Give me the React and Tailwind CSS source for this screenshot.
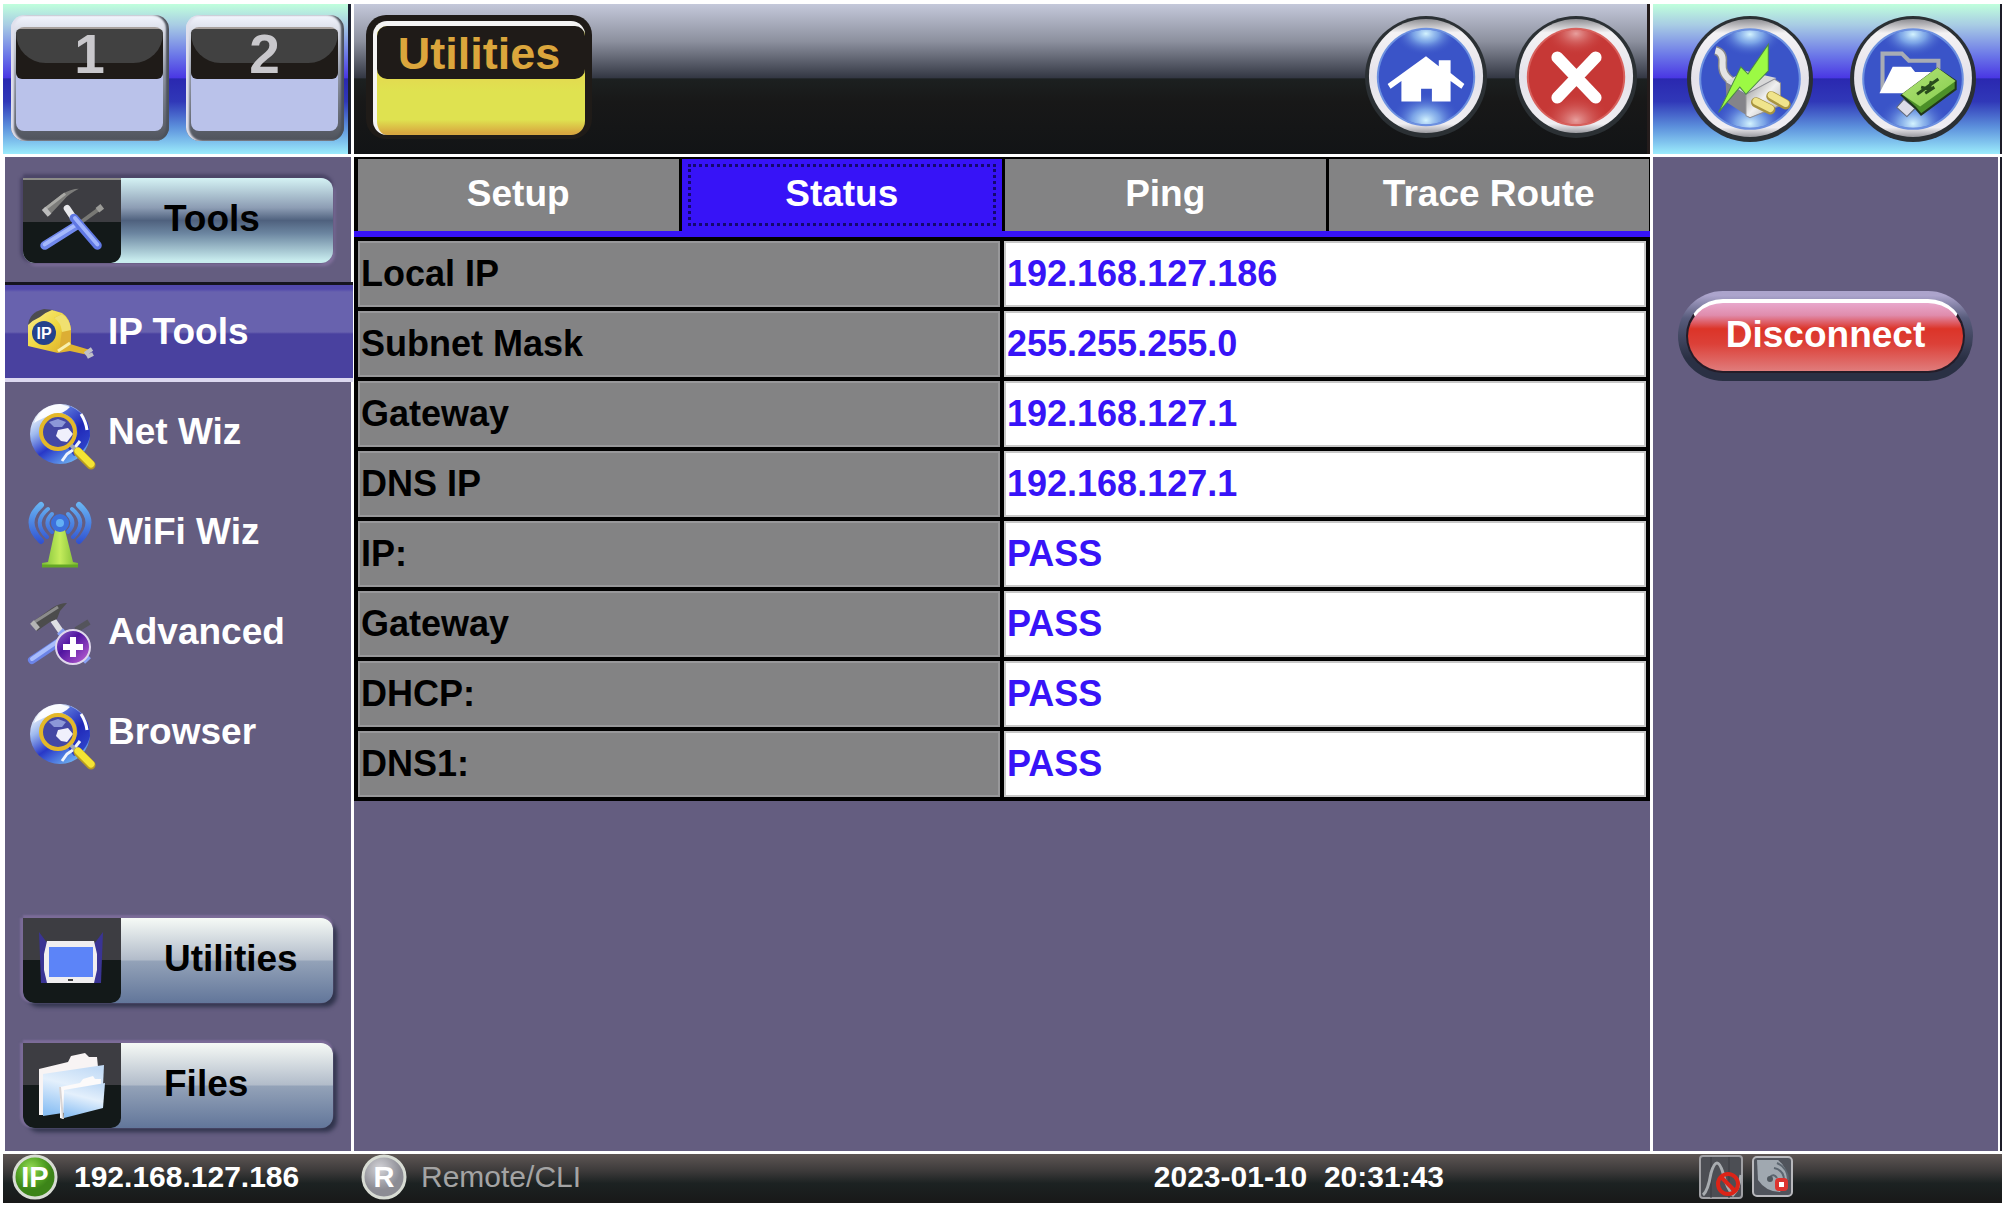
import clsx from "clsx";

const statusRows = [
  { label: "Local IP", value: "192.168.127.186" },
  { label: "Subnet Mask", value: "255.255.255.0" },
  { label: "Gateway", value: "192.168.127.1" },
  { label: "DNS IP", value: "192.168.127.1" },
  { label: "IP:", value: "PASS" },
  { label: "Gateway", value: "PASS" },
  { label: "DHCP:", value: "PASS" },
  { label: "DNS1:", value: "PASS" },
];

const tabs = ["Setup", "Status", "Ping", "Trace Route"];

const menuItems = [
  { label: "IP Tools", Icon: TapeIcon },
  { label: "Net Wiz", Icon: GlobeSearchIcon },
  { label: "WiFi Wiz", Icon: AntennaIcon },
  { label: "Advanced", Icon: AdvancedIcon },
  { label: "Browser", Icon: GlobeSearchIcon },
];

// gradients shared by all the icons
function IconDefs() {
  return (
    <svg aria-hidden="true" className="absolute h-0 w-0">
      <defs>
        <linearGradient id="rim" x1="0" x2="0" y1="0" y2="1">
          <stop offset="0" stopColor="#8d8d92" />
          <stop offset="0.12" stopColor="#f4f2f4" />
          <stop offset="0.5" stopColor="#e4e2ea" />
          <stop offset="0.92" stopColor="#f0eef2" />
          <stop offset="1" stopColor="#9a9aa0" />
        </linearGradient>
        <radialGradient id="glowBlue">
          <stop offset="0" stopColor="#d4f4ff" />
          <stop offset="0.4" stopColor="#8fbdf0" stopOpacity="0.75" />
          <stop offset="1" stopColor="#3a54c8" stopOpacity="0" />
        </radialGradient>
        <radialGradient id="glowRed">
          <stop offset="0" stopColor="#e8a09e" />
          <stop offset="1" stopColor="#c63836" stopOpacity="0" />
        </radialGradient>
        <clipPath id="disc">
          <circle cx="62" cy="62" r="48" />
        </clipPath>
        <linearGradient id="globe" x1="0.1" x2="0.7" y1="0.1" y2="1">
          <stop offset="0" stopColor="#ffffff" />
          <stop offset="0.3" stopColor="#9cb8ee" />
          <stop offset="0.6" stopColor="#2838c8" />
          <stop offset="1" stopColor="#6fb4f4" />
        </linearGradient>
        <linearGradient id="globeShade" x1="0.2" x2="0.7" y1="0" y2="1">
          <stop offset="0" stopColor="#5c78dc" />
          <stop offset="0.5" stopColor="#2028b8" />
          <stop offset="1" stopColor="#3048cc" />
        </linearGradient>
        <linearGradient id="wave" gradientUnits="userSpaceOnUse" x1="0" x2="0" y1="8" y2="50">
          <stop offset="0" stopColor="#6ab8f4" />
          <stop offset="1" stopColor="#2f50d0" />
        </linearGradient>
        <linearGradient id="cone" x1="0" x2="1" y1="0" y2="0">
          <stop offset="0" stopColor="#7cc038" />
          <stop offset="0.5" stopColor="#c4ec5c" />
          <stop offset="1" stopColor="#78b830" />
        </linearGradient>
        <linearGradient id="tape" x1="0" x2="1" y1="0" y2="1">
          <stop offset="0" stopColor="#f8ec90" />
          <stop offset="0.5" stopColor="#f0d840" />
          <stop offset="1" stopColor="#d8a828" />
        </linearGradient>
        <linearGradient id="purple" x1="0" x2="1" y1="0" y2="1">
          <stop offset="0" stopColor="#9068c8" />
          <stop offset="0.4" stopColor="#5014a0" />
          <stop offset="1" stopColor="#c868d8" />
        </linearGradient>
        <linearGradient id="folder" x1="0.6" x2="0.3" y1="0" y2="1">
          <stop offset="0" stopColor="#c4dcf6" />
          <stop offset="0.4" stopColor="#e4f0fc" />
          <stop offset="1" stopColor="#8cc0f4" />
        </linearGradient>
        <linearGradient id="steel" x1="0" x2="1" y1="0" y2="1">
          <stop offset="0" stopColor="#8c8c8c" />
          <stop offset="0.5" stopColor="#f0f0f0" />
          <stop offset="1" stopColor="#a8a8a8" />
        </linearGradient>
        <linearGradient id="stick" x1="0" x2="1" y1="0" y2="1">
          <stop offset="0" stopColor="#b4e478" />
          <stop offset="1" stopColor="#84cc4c" />
        </linearGradient>
        <radialGradient cx="0.4" cy="0.3" id="ipBadge">
          <stop offset="0" stopColor="#98dc58" />
          <stop offset="0.6" stopColor="#58a828" />
          <stop offset="1" stopColor="#3c8418" />
        </radialGradient>
        <radialGradient cx="0.4" cy="0.3" id="remoteBadge">
          <stop offset="0" stopColor="#d4d4d8" />
          <stop offset="1" stopColor="#8c8c94" />
        </radialGradient>
      </defs>
    </svg>
  );
}

function TapeIcon() {
  return (
    <svg aria-hidden="true" className="size-[76px] shrink-0" viewBox="0 0 76 76">
      <path d="M4 32 Q5 18 20 15 L30 16 L24 24 L10 30Z" fill="#4c4c50" />
      <path d="M4 52 L4 31 Q9 26 16 23 Q22 18 28 16 L38 19 Q46 24 47 36 L47 50 L34 59Z" fill="url(#tape)" />
      <path d="M30 24 Q38 26 38 36 L35 58 L47 50 L47 36 Q46 25 38 20Z" fill="#dcae34" />
      <path d="M30 24 L38 20 Q46 25 47 36 L38 38 Q37 28 30 24Z" fill="#f0e070" />
      <circle cx="20" cy="39" fill="#24428c" r="12" />
      <text fill="#fff" fontFamily="Liberation Sans" fontSize="16" fontWeight="700" textAnchor="middle" x="20" y="45">
        IP
      </text>
      <path d="M34 59 L46 50 L66 56 L64 61 L46 57Z" fill="#e0b430" />
      <path d="M34 57 L46 49" stroke="#f8f0b0" strokeWidth="3" />
      <path d="M61 60 L68 55 M63 63 L69 60" stroke="#c0c0c8" strokeWidth="4" />
    </svg>
  );
}

function GlobeSearchIcon() {
  return (
    <svg aria-hidden="true" className="size-[76px] shrink-0" viewBox="0 0 76 76">
      <circle cx="36" cy="40" fill="url(#globe)" r="30" />
      <path d="M46 12 Q66 22 66 42 Q62 58 50 62 L44 54 L54 40 Q54 24 38 19Z" fill="url(#globeShade)" />
      <path d="M10 29 Q16 12 36 10 L46 13 Q40 20 30 20 Q18 24 10 29Z" fill="#fff" fillOpacity="0.9" />
      <path d="M57 20 Q62 28 63 36" fill="none" stroke="#fff" strokeWidth="3" />
      <circle cx="34" cy="38" fill="#4448a4" r="17" />
      <path d="M25 28 L34 25 L42 28 L38 33 L30 33Z" fill="#8c98d8" />
      <path d="M34 36 L44 34 L49 40 L43 48 L37 47 L32 42Z" fill="#f0f0fc" />
      <path d="M38 67 L43 60 L49 56 L56 47" fill="none" stroke="#f0f4fc" strokeWidth="3" />
      <circle cx="34" cy="38" fill="none" r="17" stroke="#e4b828" strokeWidth="4" />
      <path d="M47 51 L54 59" stroke="#a0a8b4" strokeWidth="4" />
      <path d="M54 58 L67 71" stroke="#b89c20" strokeLinecap="round" strokeWidth="9" />
      <path d="M54 57 L67 70" stroke="#f4e434" strokeLinecap="round" strokeWidth="7" />
    </svg>
  );
}

function AntennaIcon() {
  return (
    <svg aria-hidden="true" className="size-[76px] shrink-0" viewBox="0 0 76 76">
      <g fill="none" stroke="url(#wave)" strokeLinecap="round">
        <path d="M17 11 Q-2 28 17 47 M55 11 Q74 28 55 47" strokeWidth="6" />
        <path d="M24 15 Q8 28 23 43 M48 15 Q64 28 49 43" strokeWidth="4" />
        <path d="M28 20 Q19 29 28 38 M44 20 Q53 29 44 38" strokeWidth="4" />
      </g>
      <path d="M31 36 L41 36 L49 68 L54 69 L54 73 L18 73 L18 69 L24 68Z" fill="url(#cone)" />
      <path d="M18 72 H54" stroke="#64a824" strokeWidth="3" />
      <circle cx="36" cy="29" fill="#3c70dc" r="9" />
      <circle cx="36" cy="29" fill="#64b0f4" r="4" />
    </svg>
  );
}

function AdvancedIcon() {
  return (
    <svg aria-hidden="true" className="size-[76px] shrink-0" viewBox="0 0 76 76">
      <path d="M29 26 L38 39" stroke="#e0e0e4" strokeWidth="6" />
      <path d="M7 29 L28 14 Q36 9 43 9 L36 17 L33 25 L26 28 L13 37Z" fill="#4c4c4c" />
      <path d="M9 29 L34 13" stroke="#8c8c8c" strokeWidth="3" />
      <path d="M8 28 L14 35" stroke="#b4b4b4" strokeWidth="5" />
      <path d="M36 37 L64 67" stroke="#88a0f4" strokeWidth="8" />
      <path d="M65 28 L52 36" stroke="#54545c" strokeWidth="6" />
      <path d="M8 66 L38 46" stroke="#6c84e8" strokeLinecap="round" strokeWidth="8" />
      <path d="M8 65 L37 45" stroke="#a8bcfc" strokeLinecap="round" strokeWidth="4" />
      <circle cx="49" cy="53" fill="url(#purple)" r="17" stroke="#e0d8ec" strokeWidth="2" />
      <path d="M49 43 V63 M39 53 H59" stroke="#fff" strokeWidth="6" />
    </svg>
  );
}

function ToolsIcon() {
  return (
    <svg aria-hidden="true" className="h-full w-full" viewBox="0 0 98 85">
      <path d="M19 30 L38 15 Q48 9 56 9 Q46 14 41 20 L25 37Z" fill="#7c7c7a" />
      <path d="M21 30 L42 14" stroke="#a8a8a4" strokeWidth="3" />
      <path d="M20 29 L26 36" stroke="#bcbcbc" strokeWidth="5" />
      <path d="M79 28 L57 44" stroke="#787874" strokeWidth="4" />
      <path d="M75 31 L80 27" stroke="#9c9c98" strokeWidth="6" />
      <path d="M53 47 L21 67" stroke="#7088ec" strokeLinecap="round" strokeWidth="9" />
      <path d="M53 46 L21 66" stroke="#a4b8fc" strokeLinecap="round" strokeWidth="4" />
      <path d="M44 29 L50 38" stroke="#e8e8ec" strokeLinecap="round" strokeWidth="7" />
      <path d="M51 39 L75 67" stroke="#6078e4" strokeLinecap="round" strokeWidth="9" />
      <path d="M52 39 L75 66" stroke="#a0b4fc" strokeLinecap="round" strokeWidth="4" />
    </svg>
  );
}

function TabletIcon() {
  return (
    <svg aria-hidden="true" className="h-full w-full" viewBox="0 0 98 85">
      <path d="M16 14 L25 26 L25 65 L18 65Z" fill="#3a3494" />
      <path d="M80 14 L71 26 L71 65 L78 65Z" fill="#3a3494" />
      <path d="M24 23 H71 L74 36 V52 L71 65 H24 L21 52 V36Z" fill="#f0eef0" />
      <rect fill="#5c84f8" height="30" width="44" x="26" y="29" />
      <path d="M45 62 H50" stroke="#404040" strokeWidth="2" />
    </svg>
  );
}

function FoldersIcon() {
  return (
    <svg aria-hidden="true" className="h-full w-full" viewBox="0 0 98 85">
      <path d="M16 26 L45 19 L48 13 L62 10 L66 14 L74 14 L75 24 L22 34 L20 72 L16 72Z" fill="#f8f4f4" />
      <path d="M20 31 L81 22 L79 64 L20 73Z" fill="url(#folder)" />
      <path d="M37 44 L57 40 L60 36 L70 33 L72 36 L78 36 L78 42 L41 50 L40 76 L37 75Z" fill="#fcfafa" />
      <path d="M41 47 L82 40 L80 65 L41 75Z" fill="url(#folder)" />
      <path d="M37 44 L40 76" stroke="#d8d4d4" strokeWidth="2" />
    </svg>
  );
}

function RoundButton({ label, red, className, children }) {
  const glow = red ? "url(#glowRed)" : "url(#glowBlue)";

  return (
    <button aria-label={label} className={clsx("shrink-0 cursor-pointer rounded-full", className)} type="button">
      <svg aria-hidden="true" className="h-full w-full" viewBox="0 0 124 124">
        <circle cx="62" cy="62" fill="#2b3034" r="62" />
        <circle cx="62" cy="61" fill="url(#rim)" r="58" />
        <circle cx="62" cy="62" fill={red ? "#d8605c" : "#6c90e0"} r="50" />
        <circle cx="62" cy="62" fill={red ? "#c63836" : "#3a54c8"} r="48" />
        <g clipPath="url(#disc)">
          <ellipse cx="62" cy="18" fill={glow} rx="32" ry="22" />
          <ellipse cx="62" cy="106" fill={glow} rx="36" ry="28" />
        </g>
        {children}
      </svg>
    </button>
  );
}

function PortButton({ number }) {
  return (
    <button
      className="h-[126px] min-w-0 flex-1 cursor-pointer rounded-[14px] bg-linear-to-b from-[#f4f6ff] via-[#8d93a2] to-[#4f535c] pt-3 pr-[6px] pb-[10px] pl-[5px] shadow-[inset_3px_0_2px_#e0e0ec,inset_-3px_0_2px_#4c525c]"
      type="button"
    >
      <span className="flex h-full flex-col rounded-[8px] border-t-2 border-[#a8a09c] bg-[#bac2ea]">
        <span className="relative flex h-[50px] items-center justify-center rounded-[6px] bg-[#1f1b18]">
          <span className="absolute inset-x-0 top-0 h-[34px] rounded-t-[6px] rounded-b-[40px] bg-[#414141]" />
          <span className="relative text-[55px] leading-[64px] text-[#c9c8cc]">{number}</span>
        </span>
      </span>
    </button>
  );
}

function SideButton({ label, active, Icon }) {
  return (
    <button
      className={clsx(
        "mr-[18px] ml-[18px] flex h-[85px] shrink-0 cursor-pointer items-stretch overflow-hidden rounded-tr-[12px] rounded-b-[12px] text-left text-[37px] leading-[82px] text-black",
        active
          ? "bg-[linear-gradient(#d4f2f4_0%,#8d9db4_35%,#4f617e_50%,#6b85a0_65%,#c8ecee_97%)] shadow-[0_-4px_3px_#4c4668,-3px_0_3px_#4c4668,2px_3px_3px_#80709c]"
          : "bg-[linear-gradient(#f6faf6_0%,#b2bcca_49%,#93a2b8_51%,#62769a_100%)] shadow-[0_-3px_2px_#7c6c98,-3px_0_2px_#7c6c98,4px_4px_4px_#30344c]",
      )}
      type="button"
    >
      <span
        className={clsx(
          "w-[98px] shrink-0 rounded-b-[10px] bg-[linear-gradient(#3d3d42_50%,#131919_50%)]",
          active && "border-t-2 border-[#8c8c88]",
        )}
      >
        <Icon />
      </span>
      <span className="pl-[43px]">{label}</span>
    </button>
  );
}

function MenuItem({ label, active, Icon }) {
  return (
    <li>
      <a
        className={clsx(
          "flex h-[100px] items-center gap-2 pl-[19px] text-[37px] leading-[44px] whitespace-nowrap text-white",
          active &&
            "-mr-[2px] border-t-[3px] border-b-4 border-t-[#16151f] border-b-[#dcd8f0] bg-[linear-gradient(#5249ac_0px,#5249ac_4px,#6862ae_7px,#6862ae_47px,#49419f_49px)]",
        )}
        href="#"
      >
        <Icon />
        {label}
      </a>
    </li>
  );
}

function Header() {
  return (
    <header className="grid h-[150px] grid-cols-[348px_minmax(0,1fr)_349px] gap-x-[3px]">
      <div className="flex gap-[17px] border-r-[3px] border-[#1c2030] bg-[linear-gradient(#c0ffdc_0%,#a8cce4_14%,#6c78e8_34%,#4a38e4_49%,#2a28b0_50%,#3038b8_65%,#5c90dc_82%,#9cecfc_100%)] pt-[11px] pr-[4px] pl-2">
        <PortButton number="1" />
        <PortButton number="2" />
      </div>

      <div className="flex items-start border-r-[3px] border-[#241c1c] bg-[linear-gradient(#c4c8da_0%,#8c909e_25%,#343844_49%,#1c2020_50%,#181818_65%,#121416_100%)] pr-[10px] pl-3">
        <button
          className="mt-[11px] h-[124px] w-[226px] cursor-pointer rounded-[20px] bg-[#1f1b18] px-[7px] pt-[6px] pb-[4px]"
          type="button"
        >
          <span className="flex h-full flex-col rounded-[14px] border-t-[5px] border-l-[4px] border-[#f4f4f4] bg-[linear-gradient(#e2dc50_50%,#dfe250_60%,#dfe250_86%,#d8a840_98%)]">
            <span className="h-[53px] rounded-[10px] bg-[#1f1b18] pr-1 text-[45px] leading-[56px] text-[#dba63c]">
              Utilities
            </span>
          </span>
        </button>
        <div className="mt-[12px] ml-auto flex gap-7">
          <RoundButton className="size-[122px]" label="Home">
            <path
              d="M62 41 L75 51 V45 H87 V58 L101 69 L98 74 L87 66 V87 H68 V74 H57 V87 H37 V66 L26 74 L23 69Z"
              fill="#fff"
            />
          </RoundButton>
          <RoundButton className="size-[122px]" label="Close" red>
            <path d="M43 42 L82 83 M82 42 L43 83" stroke="#fff" strokeLinecap="round" strokeWidth="12" />
          </RoundButton>
        </div>
      </div>

      <div className="flex items-center gap-[37px] border-r-2 border-[#1c1c28] bg-[linear-gradient(#c0ffdc_0%,#a8cce4_14%,#6c78e8_34%,#4a38e4_49%,#2a28b0_50%,#3038b8_65%,#5c90dc_82%,#9cecfc_100%)] pl-[34px]">
        <RoundButton className="size-[126px]" label="Power">
          <path d="M28 34 Q36 36 35 46 Q34 58 44 64" fill="none" stroke="#88888c" strokeWidth="9" />
          <path d="M28 34 Q36 36 35 46 Q34 58 44 64" fill="none" stroke="#e4e4e4" strokeWidth="6" />
          <path d="M38 65 L57 54 L88 61 L58 77Z" fill="#d8d8d8" />
          <path d="M38 65 L58 77 L62 100 L39 85Z" fill="#84848a" />
          <path d="M58 77 L86 62 L92 66 L92 88 L62 100 L58 98Z" fill="url(#steel)" stroke="#909094" />
          <path d="M68 85 L82 92 M83 79 L97 87" stroke="#a89440" strokeLinecap="round" strokeWidth="10" />
          <path d="M68 84 L82 91 M83 78 L97 86" stroke="#f0e48c" strokeLinecap="round" strokeWidth="7" />
          <path
            d="M80 28 L80 54 L58 77 L52 70 L31 95 L53 50 L60 57Z"
            fill="#9cfa44"
            stroke="#4c8848"
            strokeWidth="1"
          />
        </RoundButton>
        <RoundButton className="size-[126px]" label="Save to USB">
          <path d="M32 74 V37 H51 L58 44 H87 V56" fill="none" stroke="#a8acb4" strokeWidth="4" />
          <path d="M42 50 H60 L64 55 H86 L72 76 H29Z" fill="#fff" />
          <path d="M53 82 L64 91 L56 99 L46 90Z" fill="#dcdce8" stroke="#606878" />
          <path d="M51 78 L86 52 L104 64 L104 72 L70 97 L64 90Z" fill="#4c9028" stroke="#20381c" strokeWidth="2" />
          <path d="M51 77 L86 51 L104 64 L69 89Z" fill="url(#stick)" />
          <path d="M66 77 L87 62 M70 70 L78 72 L80 64 M74 76 L83 70" fill="none" stroke="#284c1c" strokeWidth="3" />
        </RoundButton>
      </div>
    </header>
  );
}

function Sidebar() {
  return (
    <nav className="ml-[2px] flex flex-col bg-[#645d80] pt-[21px] pb-[23px]">
      <SideButton Icon={ToolsIcon} active label="Tools" />
      <ul className="mt-[19px] mb-10">
        {menuItems.map((item, index) => (
          <MenuItem Icon={item.Icon} active={index === 0} key={item.label} label={item.label} />
        ))}
      </ul>
      <div className="mt-auto flex flex-col gap-10">
        <SideButton Icon={TabletIcon} label="Utilities" />
        <SideButton Icon={FoldersIcon} label="Files" />
      </div>
    </nav>
  );
}

function StatusPanel() {
  return (
    <main className="bg-[#645d80]">
      <div
        className="grid grid-cols-4 gap-x-[3px] border-b-[6px] border-[#3713f7] bg-black pt-[2px] pr-px pl-1"
        role="tablist"
      >
        {tabs.map((tab) => (
          <button
            aria-selected={tab === "Status"}
            className={clsx(
              "h-[72px] cursor-pointer text-[37px] text-white",
              tab === "Status" ? "bg-[#3713f7] px-[6px] py-[5px]" : "bg-[#838384] p-2",
            )}
            key={tab}
            role="tab"
            type="button"
          >
            <span
              className={clsx(
                "flex h-full items-center justify-center pb-[2px]",
                tab === "Status" && "border-[3px] border-dotted border-[#140870]",
              )}
            >
              {tab}
            </span>
          </button>
        ))}
      </div>

      <table className="w-full table-fixed border-separate border-spacing-1 bg-black text-[36px] leading-[60px]">
        <tbody>
          {statusRows.map((row, index) => (
            <tr key={index}>
              <th
                className="h-[66px] border-2 border-[#98989a] bg-[#838384] p-0 pl-px text-left font-bold text-black"
                scope="row"
              >
                {row.label}
              </th>
              <td className="h-[66px] border-2 border-[#c8c8c8] bg-white p-0 pl-px text-[#3713f7]">{row.value}</td>
            </tr>
          ))}
        </tbody>
      </table>
    </main>
  );
}

function ActionPanel() {
  return (
    <aside className="border-r-2 border-[#1c1c28]">
      <div className="h-full border-r-2 border-white bg-[#645d80] px-[25px] pt-[134px]">
        <button
          className="h-[90px] w-full cursor-pointer rounded-full bg-linear-to-b from-[#aca4cc] from-5% via-[#585c7c] via-30% to-[#2a3044] to-75% px-[8px] pt-[8px] pb-[8px]"
          type="button"
        >
          <span className="block h-full rounded-full border-2 border-t-4 border-[#241c28] border-t-white bg-[linear-gradient(#e8a8cc_0%,#e08cac_18%,#dc3428_38%,#dc4038_60%,#e07c7c_100%)] text-[37px] leading-[64px] text-white">
            Disconnect
          </span>
        </button>
      </div>
    </aside>
  );
}

function Badge({ letters, fill }) {
  return (
    <svg aria-hidden="true" className="size-[46px] shrink-0" viewBox="0 0 46 46">
      <circle cx="23" cy="23" fill={fill} r="21" stroke="#d8dcd4" strokeWidth="3" />
      <text fill="#fff" fontFamily="Liberation Sans" fontSize="29" fontWeight="700" textAnchor="middle" x="23" y="33">
        {letters}
      </text>
    </svg>
  );
}

function StatusBar() {
  return (
    <footer className="grid h-[49px] grid-cols-[348px_minmax(0,1fr)_349px] gap-x-[3px] bg-[linear-gradient(#5e5654_0%,#3c3a3a_35%,#1c2222_60%,#181818_100%)] pb-[3px] text-[30px] leading-[44px] whitespace-pre text-white">
      <div className="flex items-center gap-4 pl-[9px]">
        <Badge fill="url(#ipBadge)" letters="IP" />
        192.168.127.186
      </div>
      <div className="flex items-center gap-[14px] pl-[7px]">
        <Badge fill="url(#remoteBadge)" letters="R" />
        <span className="font-normal text-[#a4a4a4]">Remote/CLI</span>
        <time className="mr-[206px] ml-auto">{"2023-01-10  20:31:43"}</time>
      </div>
      <div className="flex items-center gap-2 pl-[46px]">
        <svg aria-hidden="true" className="size-[45px]" viewBox="0 0 45 45">
          <rect fill="#4c4e54" height="42" rx="3" stroke="#a0a0a4" strokeWidth="2" width="42" x="1" y="1" />
          <path d="M12 2 V43 M30 2 V43" stroke="#383a40" />
          <path d="M4 40 Q9 36 12 18 Q18 -2 24 18 Q28 34 34 40 Q40 34 42 20" fill="none" stroke="#a8acb0" strokeWidth="3" />
          <circle cx="29" cy="29" fill="none" r="10" stroke="#dc2418" strokeWidth="4" />
          <path d="M22 22 L36 36" stroke="#dc2418" strokeWidth="4" />
        </svg>
        <svg aria-hidden="true" className="size-[42px]" viewBox="0 0 42 42">
          <rect fill="#50545c" height="39" rx="4" stroke="#b8b8bc" strokeWidth="2" width="39" x="1" y="1" />
          <path d="M5 4 H26 Q36 12 35 24 L28 36 Q14 36 6 24Z" fill="#a0a8b0" />
          <path d="M18 21 Q22 17 25 22 M22 12 Q32 14 32 24 M25 7 Q36 12 36 24" fill="none" stroke="#5c6670" strokeWidth="2" />
          <circle cx="18" cy="23" fill="#50585f" r="3" />
          <rect fill="#fff" height="9" rx="2" stroke="#dc3430" strokeWidth="4" width="9" x="25" y="24" />
        </svg>
      </div>
    </footer>
  );
}

export default function App() {
  return (
    <div className="flex min-h-screen flex-col gap-[3px] bg-white pt-1 pr-[5px] pb-[7px] pl-[3px] font-['Liberation_Sans',Arial,sans-serif] font-bold">
      <IconDefs />
      <Header />
      <div className="grid flex-1 grid-cols-[348px_minmax(0,1fr)_349px] gap-x-[3px]">
        <Sidebar />
        <StatusPanel />
        <ActionPanel />
      </div>
      <StatusBar />
    </div>
  );
}
